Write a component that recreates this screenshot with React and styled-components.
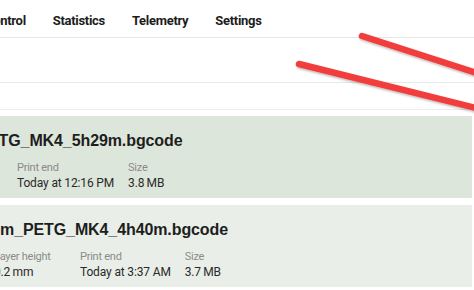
import React from 'react'
import styled, { createGlobalStyle } from 'styled-components'

const GlobalStyle = createGlobalStyle`
  html, body {
    margin: 0;
    padding: 0;
    background: #fff;
    overflow: hidden;
  }
  body {
    font-family: Roboto, "Liberation Sans", Arial, sans-serif;
    color: #222;
  }
`

const Page = styled.div`
  position: relative;
  width: 474px;
  height: 290px;
  overflow: hidden;
  background: #fff;
`

const NavBar = styled.nav`
  height: 38px;
  box-sizing: border-box;
  padding-top: 3px;
  border-bottom: 1px solid #e6e6e6;
  display: flex;
  align-items: center;
  gap: 27px;
  margin-left: -15px;
`

const NavItem = styled.a`
  font-size: 13px;
  font-weight: 700;
  letter-spacing: -0.3px;
  color: #1c1c1c;
  text-decoration: none;
  white-space: nowrap;
`

const Toolbar = styled.div`
  height: 44px;
  border-bottom: 1px solid #e8e8e8;
`

const ListHeader = styled.div`
  height: 26px;
  border-bottom: 1px solid #ececec;
`

const FileList = styled.div`
  display: flex;
  flex-direction: column;
  gap: 7px;
  padding: 6px 2px 0 0;
`

const Card = styled.div`
  height: 82px;
  box-sizing: border-box;
  padding-top: 15px;
  background: ${p => (p.$active ? '#dde6da' : '#e9efe8')};
  overflow: hidden;
`

const FileName = styled.div`
  font-family: "Liberation Sans", Arial, sans-serif;
  font-size: 16px;
  font-weight: 700;
  line-height: 20px;
  letter-spacing: -0.1px;
  color: #1e1e1e;
  white-space: nowrap;
  margin-left: ${p => p.$shift}px;
`

const Details = styled.div`
  display: flex;
  gap: 14px;
  margin-top: 10px;
  margin-left: ${p => p.$indent}px;
`

const Column = styled.div`
  min-width: 72px;
  display: flex;
  flex-direction: column;
`

const Label = styled.span`
  font-size: 11px;
  line-height: 14px;
  letter-spacing: -0.25px;
  color: #8b8b8b;
  white-space: nowrap;
`

const Value = styled.span`
  font-size: 12px;
  line-height: 16px;
  letter-spacing: -0.15px;
  color: #2a2a2a;
  white-space: nowrap;
`

const Annotation = styled.svg`
  position: absolute;
  left: 0;
  top: 0;
  pointer-events: none;
`

const files = [
  {
    name: 'ETG_MK4_5h29m.bgcode',
    shift: -12,
    indent: 17,
    active: true,
    details: [
      ['Print end', 'Today at 12:16 PM'],
      ['Size', '3.8\u2009MB'],
    ],
  },
  {
    name: 'm_PETG_MK4_4h40m.bgcode',
    shift: 0,
    indent: -6,
    details: [
      ['Layer height', '0.2\u2009mm'],
      ['Print end', 'Today at 3:37 AM'],
      ['Size', '3.7\u2009MB'],
    ],
  },
]

const tabs = ['Control', 'Statistics', 'Telemetry', 'Settings']

export default function App() {
  return (
    <Page>
      <GlobalStyle />
      <NavBar>
        {tabs.map(t => (
          <NavItem key={t}>{t}</NavItem>
        ))}
      </NavBar>
      <Toolbar />
      <ListHeader />
      <FileList>
        {files.map(f => (
          <Card key={f.name} $active={f.active}>
            <FileName $shift={f.shift}>{f.name}</FileName>
            <Details $indent={f.indent}>
              {f.details.map(([label, value]) => (
                <Column key={label}>
                  <Label>{label}</Label>
                  <Value>{value}</Value>
                </Column>
              ))}
            </Details>
          </Card>
        ))}
      </FileList>

      {/* red arrows drawn over the screenshot */}
      <Annotation width="474" height="290" viewBox="0 0 474 290">
        <defs>
          <filter id="shade" x="-10%" y="-50%" width="120%" height="200%">
            <feDropShadow dx="1" dy="1.5" stdDeviation="1" floodColor="#000" floodOpacity="0.3" />
          </filter>
        </defs>
        <g stroke="#f23d3d" strokeWidth="6.5" strokeLinecap="round" filter="url(#shade)">
          <line x1="362" y1="36" x2="492" y2="78" />
          <line x1="299" y1="64" x2="492" y2="112" />
        </g>
      </Annotation>
    </Page>
  )
}
